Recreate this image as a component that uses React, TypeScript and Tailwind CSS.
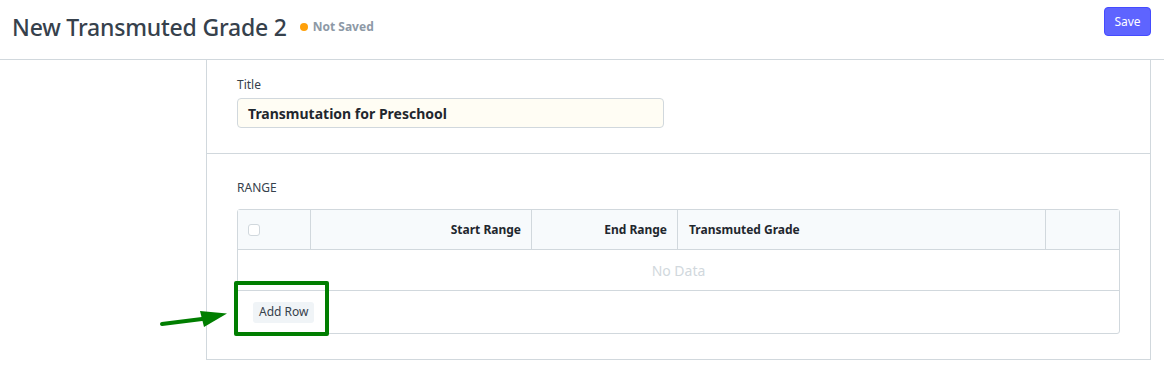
import React from "react";

export default function App() {
  const font = { fontFamily: '"Noto Sans", "Open Sans", sans-serif' };
  return (
    <div className="relative w-[1164px] h-[382px] bg-white text-[#36414c] overflow-hidden" style={font}>
      {/* Header */}
      <div className="h-[60px] flex items-start justify-between border-b border-[#d1d8dd]">
        <div className="mt-[12px] ml-[12px] flex items-center">
          <h1 className="text-[23px] leading-[30px] font-medium text-[#36414c] tracking-[-0.2px]">New Transmuted Grade 2</h1>
          <span className="ml-[13px] w-[8px] h-[8px] rounded-full bg-[#ffa00a]" />
          <span className="ml-[5px] text-[12px] font-bold text-[#8d99a6]">Not Saved</span>
        </div>
        <button className="mt-[7px] mr-[13px] w-[47px] h-[29px] rounded-[4px] bg-[#5e64ff] border border-[#444bff] text-white text-[12px] leading-none">
          Save
        </button>
      </div>

      {/* Body */}
      <div className="flex">
        <div className="w-[206px] shrink-0" />
        <div className="w-[945px] border-l border-r border-b border-[#d1d8dd]">
          {/* Section 1 */}
          <div className="pt-[17px] px-[30px] pb-[25px] border-b border-[#d1d8dd]">
            <div className="text-[12px] leading-[16px] text-[#36414c]">Title</div>
            <div className="mt-[5px] w-[427px] h-[30px] rounded-[4px] border border-[#d1d8dd] bg-[#fffdf4] flex items-center px-[10px]">
              <span className="text-[14px] font-bold text-[#1f272e]">Transmutation for Preschool</span>
            </div>
          </div>
          {/* Section 2 */}
          <div className="pt-[26px] px-[30px] pb-[25px]">
            <div className="text-[12px] leading-[16px] text-[#36414c] uppercase">Range</div>
            <div className="mt-[13px] w-[883px] border border-[#d1d8dd] rounded-[3px]">
              <div className="flex h-[40px] bg-[#f7fafc] border-b border-[#d1d8dd] text-[12px] font-bold text-[#1f272e]">
                <div className="w-[73px] flex items-center pl-[10px] border-r border-[#d1d8dd]">
                  <span className="w-[12px] h-[12px] rounded-[3px] border border-[#d1d8dd] bg-white" />
                </div>
                <div className="w-[221px] flex items-center justify-end pr-[10px] border-r border-[#d1d8dd]">Start Range</div>
                <div className="w-[146px] flex items-center justify-end pr-[10px] border-r border-[#d1d8dd]">End Range</div>
                <div className="w-[368px] flex items-center pl-[11px] border-r border-[#d1d8dd]">Transmuted Grade</div>
                <div className="flex-1" />
              </div>
              <div className="h-[41px] flex items-center justify-center border-b border-[#d1d8dd] text-[14px] text-[#d1d8dd]">
                No Data
              </div>
              <div className="h-[42px] flex items-center pl-[15px]">
                <button className="h-[21px] px-[6px] rounded-[3px] bg-[#f0f4f7] text-[12px] text-[#36414c] leading-none">Add Row</button>
              </div>
            </div>
          </div>
        </div>
      </div>

      {/* Annotation box */}
      <div className="absolute left-[234px] top-[281px] w-[95px] h-[55px] border-[4px] border-[#007e00] rounded-[2px]" />
      {/* Arrow */}
      <svg className="absolute left-0 top-0" width="1164" height="382" viewBox="0 0 1164 382">
        <line x1="162" y1="324" x2="206" y2="318.5" stroke="#007e00" strokeWidth="4" strokeLinecap="round" />
        <polygon points="200,311 227,313.5 204,327" fill="#007e00" />
      </svg>
    </div>
  );
}
